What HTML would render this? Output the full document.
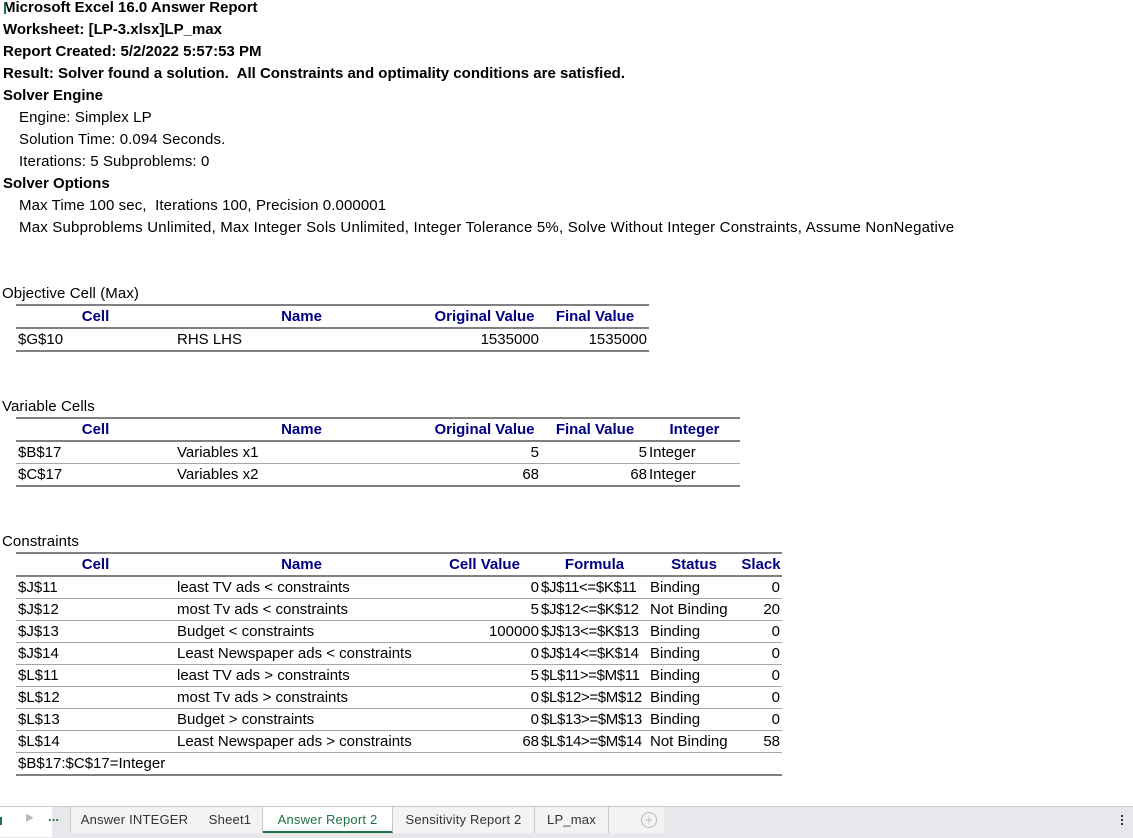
<!DOCTYPE html>
<html><head><meta charset="utf-8"><style>
body{margin:0;width:1133px;height:837px;overflow:hidden;background:#fff;font-family:"Liberation Sans","Noto Sans CJK KR",sans-serif;font-size:15px;letter-spacing:0.1px;color:#000;position:relative}
.l{position:absolute;white-space:nowrap;line-height:22px;height:22px;margin-top:1px}
.b{font-weight:bold;letter-spacing:0}
table{position:absolute;border-collapse:collapse;font-size:15px;left:16px;table-layout:fixed;letter-spacing:0}
td{line-height:20px;padding:1px 2px 0 2px;white-space:nowrap;border-bottom:1px solid #a6a6a6;overflow:visible}
th{height:21px;line-height:21px;color:#000080;font-weight:bold;text-align:center;border-top:2px solid #808080;border-bottom:2px solid #808080;padding:0;letter-spacing:0}
tr.last td{border-bottom:2px solid #808080}
.r{text-align:right}
.f{padding:1px 0 0 0;letter-spacing:-0.35px}
.tabs{position:absolute;left:0;top:806px;width:1133px;height:31px;background:#e6e8ec;border-top:1px solid #c8c8c8}
.tab{position:absolute;top:0;height:26px;line-height:26px;font-size:13px;color:#333;text-align:center;border-right:1px solid #c8c8c8;background:#f3f3f3;letter-spacing:0.2px}
</style></head><body>
<div class="l b" style="left:3px;top:-4px">Microsoft Excel 16.0 Answer Report</div>
<div style="position:absolute;left:4px;top:2px;width:2px;height:12px;background:#217346"></div>
<div class="l b" style="left:3px;top:18px">Worksheet: [LP-3.xlsx]LP_max</div>
<div class="l b" style="left:3px;top:40px">Report Created: 5/2/2022 5:57:53 PM</div>
<div class="l b" style="left:3px;top:62px">Result: Solver found a solution.&nbsp; All Constraints and optimality conditions are satisfied.</div>
<div class="l b" style="left:3px;top:84px">Solver Engine</div>
<div class="l" style="left:19px;top:106px">Engine: Simplex LP</div>
<div class="l" style="left:19px;top:128px">Solution Time: 0.094 Seconds.</div>
<div class="l" style="left:19px;top:150px">Iterations: 5 Subproblems: 0</div>
<div class="l b" style="left:3px;top:172px">Solver Options</div>
<div class="l" style="left:19px;top:194px">Max Time 100 sec,&nbsp; Iterations 100, Precision 0.000001</div>
<div class="l" style="left:19px;top:216px;letter-spacing:0.2px">Max Subproblems Unlimited, Max Integer Sols Unlimited, Integer Tolerance 5%, Solve Without Integer Constraints, Assume NonNegative</div>

<div class="l" style="left:2px;top:282px">Objective Cell (Max)</div>
<table style="top:304px;width:633px">
<colgroup><col style="width:159px"><col style="width:253px"><col style="width:113px"><col style="width:108px"></colgroup>
<tr><th>Cell</th><th>Name</th><th>Original Value</th><th>Final Value</th></tr>
<tr class="last"><td>$G$10</td><td>RHS LHS</td><td class="r">1535000</td><td class="r">1535000</td></tr>
</table>

<div class="l" style="left:2px;top:395px">Variable Cells</div>
<table style="top:417px;width:724px">
<colgroup><col style="width:159px"><col style="width:253px"><col style="width:113px"><col style="width:108px"><col style="width:91px"></colgroup>
<tr><th>Cell</th><th>Name</th><th>Original Value</th><th>Final Value</th><th>Integer</th></tr>
<tr><td>$B$17</td><td>Variables x1</td><td class="r">5</td><td class="r">5</td><td style="padding-left:0">Integer</td></tr>
<tr class="last"><td>$C$17</td><td>Variables x2</td><td class="r">68</td><td class="r">68</td><td style="padding-left:0">Integer</td></tr>
</table>

<div class="l" style="left:2px;top:530px">Constraints</div>
<table style="top:552px;width:766px">
<colgroup><col style="width:159px"><col style="width:253px"><col style="width:113px"><col style="width:107px"><col style="width:92px"><col style="width:42px"></colgroup>
<tr><th>Cell</th><th>Name</th><th>Cell Value</th><th>Formula</th><th>Status</th><th>Slack</th></tr>
<tr><td>$J$11</td><td>least TV ads &lt; constraints</td><td class="r">0</td><td class="f">$J$11&lt;=$K$11</td><td>Binding</td><td class="r">0</td></tr>
<tr><td>$J$12</td><td>most Tv ads &lt; constraints</td><td class="r">5</td><td class="f">$J$12&lt;=$K$12</td><td>Not Binding</td><td class="r">20</td></tr>
<tr><td>$J$13</td><td>Budget &lt; constraints</td><td class="r">100000</td><td class="f">$J$13&lt;=$K$13</td><td>Binding</td><td class="r">0</td></tr>
<tr><td>$J$14</td><td>Least Newspaper ads &lt; constraints</td><td class="r">0</td><td class="f">$J$14&lt;=$K$14</td><td>Binding</td><td class="r">0</td></tr>
<tr><td>$L$11</td><td>least TV ads &gt; constraints</td><td class="r">5</td><td class="f">$L$11&gt;=$M$11</td><td>Binding</td><td class="r">0</td></tr>
<tr><td>$L$12</td><td>most Tv ads &gt; constraints</td><td class="r">0</td><td class="f">$L$12&gt;=$M$12</td><td>Binding</td><td class="r">0</td></tr>
<tr><td>$L$13</td><td>Budget &gt; constraints</td><td class="r">0</td><td class="f">$L$13&gt;=$M$13</td><td>Binding</td><td class="r">0</td></tr>
<tr><td>$L$14</td><td>Least Newspaper ads &gt; constraints</td><td class="r">68</td><td class="f">$L$14&gt;=$M$14</td><td>Not Binding</td><td class="r">58</td></tr>
<tr class="last"><td colspan="6">$B$17:$C$17=Integer</td></tr>
</table>

<div class="tabs">
<div style="position:absolute;left:0;top:0;width:52px;height:30px;background:#fff"></div>
<div style="position:absolute;left:0;top:10px;width:2px;height:8px;background:#217346"></div>
<div style="position:absolute;left:25px;top:4px;font-size:9px;color:#bbb">&#9654;</div>
<div style="position:absolute;left:48px;top:2px;font-size:13px;font-weight:bold;color:#217346">...</div>
<div class="tab" style="left:70px;width:127px;border-left:1px solid #c8c8c8">Answer INTEGER</div>
<div class="tab" style="left:198px;width:64px">Sheet1</div>
<div class="tab" style="left:263px;width:129px;background:#fff;color:#217346;height:24px;border-bottom:2px solid #217346">Answer Report 2</div>
<div class="tab" style="left:393px;width:141px">Sensitivity Report 2</div>
<div class="tab" style="left:535px;width:73px">LP_max</div>
<div style="position:absolute;left:609px;top:0;width:55px;height:26px;background:#f3f3f3"></div>
<div style="position:absolute;left:641px;top:5px;width:14px;height:14px;border:1px solid #bbb;border-radius:50%;color:#bbb;font-size:13px;line-height:14px;text-align:center">+</div>
<div style="position:absolute;left:1121px;top:8px;width:2px;height:2px;background:#333;box-shadow:0 4px 0 #333,0 8px 0 #333"></div>
</div>
</body></html>
